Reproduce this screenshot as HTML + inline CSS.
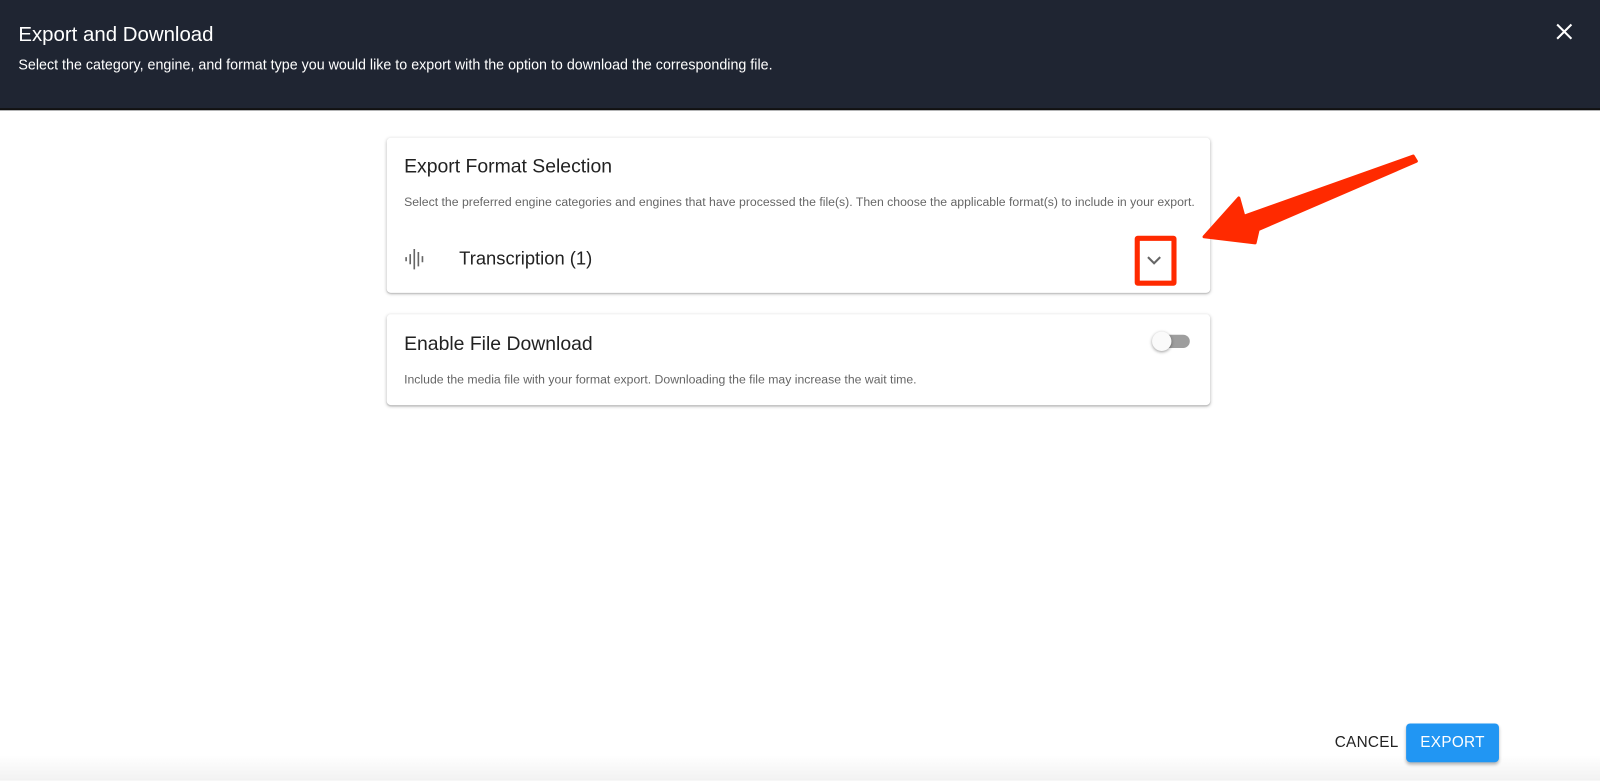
<!DOCTYPE html>
<html><head><meta charset="utf-8"><style>
*{box-sizing:border-box;margin:0;padding:0}
body{width:1600px;height:780px;background:#fff;font-family:"Liberation Sans",sans-serif;overflow:hidden}
#w{position:relative;width:1568px;height:765px;transform:scale(1.020408);transform-origin:0 0}
.hdr{position:absolute;left:0;top:0;width:1568px;height:108px;background:#1f2532;border-bottom:2px solid #111}
.hdr h1{position:absolute;left:18px;top:23px;font-size:20px;font-weight:400;color:#fff}
.hdr p{position:absolute;left:18px;top:55px;font-size:14px;color:#fff}
.x{position:absolute;left:1524px;top:22px}
.card{position:absolute;left:379px;width:807px;background:#fff;border-radius:4px;box-shadow:0 1px 3px rgba(0,0,0,.25),0 1px 1px rgba(0,0,0,.1)}
.t{position:absolute;left:17px;font-size:19px;color:#222}
.s{position:absolute;left:17px;font-size:12px;color:#666}
.btnc{position:absolute;left:1308px;top:719px;font-size:15px;color:#222;letter-spacing:.3px}
.btne{position:absolute;left:1378px;top:709px;width:91px;height:38px;background:#2196f3;border-radius:4px;color:#fff;font-size:15px;text-align:center;line-height:38px;box-shadow:0 2px 3px rgba(0,0,0,.3);letter-spacing:.3px}
.foot{position:absolute;left:0;top:740px;width:1568px;height:25px;background:linear-gradient(#fff,#f2f2f2)}
</style></head><body><div id="w">
<div class="hdr"><h1>Export and Download</h1><p>Select the category, engine, and format type you would like to export with the option to download the corresponding file.</p>
<svg class="x" width="18" height="18" viewBox="0 0 18 18"><path d="M2 2L16 16M16 2L2 16" stroke="#fff" stroke-width="2"/></svg></div>
<div class="card" style="top:135px;height:152px">
<div class="t" style="top:18px">Export Format Selection</div>
<div class="s" style="top:56px">Select the preferred engine categories and engines that have processed the file(s). Then choose the applicable format(s) to include in your export.</div>
<svg style="position:absolute;left:17px;top:108px" width="24" height="22" viewBox="0 0 24 22"><path d="M2 9v4M6 6v10M10 1v20M14 4v14M18 8v6" stroke="#666" stroke-width="1.6"/></svg>
<div style="position:absolute;left:71px;top:108px;font-size:18px;color:#222">Transcription (1)</div>
<div style="position:absolute;left:733px;top:96px;width:41px;height:49px;border:5px solid #ff2a00;border-radius:3px"></div>
<svg style="position:absolute;left:744px;top:114px" width="16" height="12" viewBox="0 0 16 12"><path d="M2 3l6 6 6-6" stroke="#666" stroke-width="2" fill="none"/></svg>
</div>
<div class="card" style="top:308px;height:89px">
<div class="t" style="top:19px">Enable File Download</div>
<div class="s" style="top:57px">Include the media file with your format export. Downloading the file may increase the wait time.</div>
<div style="position:absolute;left:753px;top:20px;width:34px;height:13px;border-radius:7px;background:#9e9e9e"></div>
<div style="position:absolute;left:750px;top:17px;width:19px;height:19px;border-radius:50%;background:#fafafa;box-shadow:0 1px 3px rgba(0,0,0,.4)"></div>
</div>
<svg style="position:absolute;left:1178px;top:150px" width="215" height="100" viewBox="0 0 215 100"><path d="M2 82L36 44L41 62L207 3L210 8L55 75L52 88Z" fill="#ff2a00" stroke="#ff2a00" stroke-width="3" stroke-linejoin="round"/></svg>
<div class="foot"></div>
<div class="btnc">CANCEL</div>
<div class="btne">EXPORT</div>
</div></body></html>
